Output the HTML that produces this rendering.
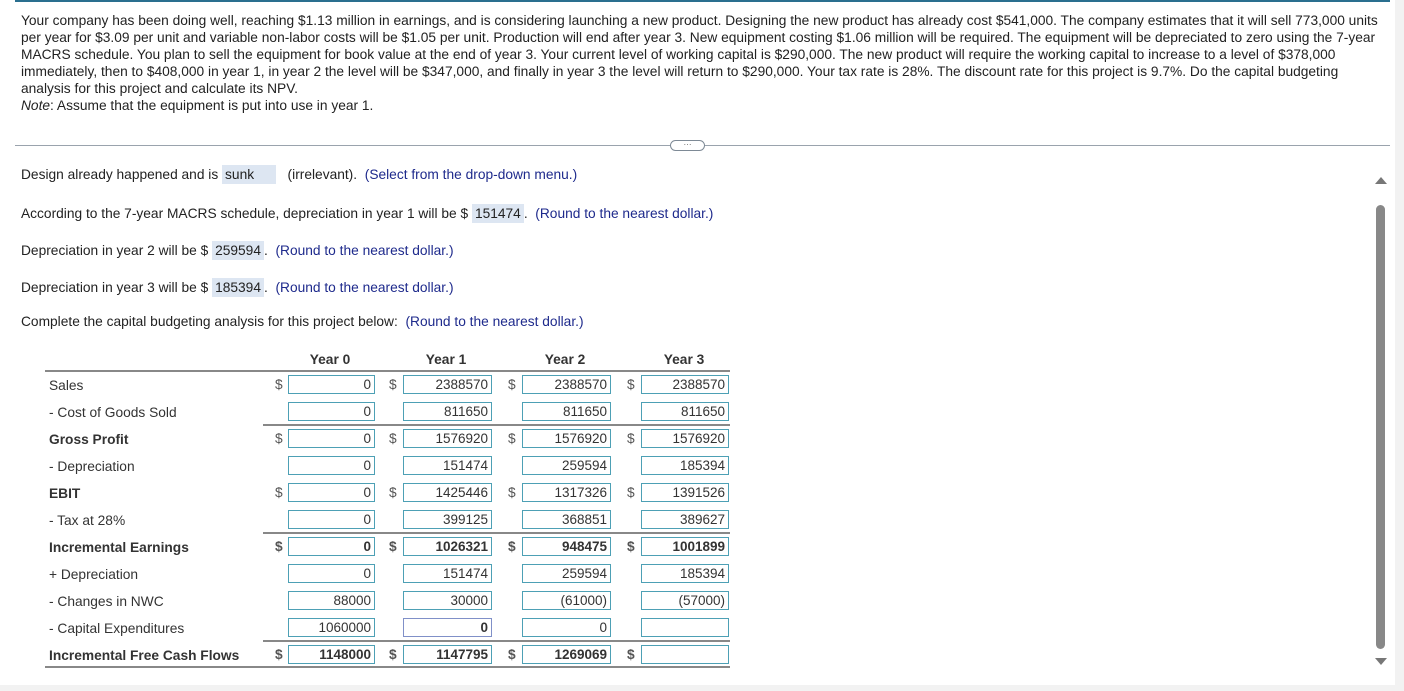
<!DOCTYPE html>
<html><head><style>
body{margin:0;width:1404px;height:691px;background:#f2f2f2;font-family:"Liberation Sans",Arial,sans-serif;font-size:13.75px;color:#222;position:relative;overflow:hidden}
.main{position:absolute;left:0;top:0;width:1395px;height:685px;background:#fff}
.topline{position:absolute;left:15px;top:0;width:1375px;height:2px;background:#2a6f8f}
.p{position:absolute;left:21px;top:12px;width:1365px;line-height:17.1px}
.sep{position:absolute;left:15px;top:145px;width:1375px;height:1px;background:#9aa3ad}
.pill{position:absolute;left:670px;top:140px;width:33px;height:9px;border:1px solid #7e8a96;border-radius:6px;background:#fff;font-size:8px;line-height:7px;text-align:center;color:#555}
.t{position:absolute;left:21px;white-space:nowrap}
.b{color:#1e2a8c}
.hl{background:#dde6f2;padding:2px 3px}
.sc{position:absolute;left:1376px;top:205px;width:9px;height:444px;background:#888;border-radius:5px}
.up{position:absolute;left:1375px;top:177px;width:0;height:0;border-left:6px solid transparent;border-right:6px solid transparent;border-bottom:7px solid #777}
.dn{position:absolute;left:1375px;top:658px;width:0;height:0;border-left:6px solid transparent;border-right:6px solid transparent;border-top:7px solid #777}
.lbl{position:absolute;left:49px;white-space:nowrap;color:#333}
.bold{font-weight:bold}
.box{position:absolute;height:19px;border:1px solid #4da0b5;box-sizing:border-box;background:#fff;text-align:right;padding-right:3px;line-height:17px;color:#333;font-size:13.5px}
.ds{position:absolute;color:#555}
.hd{position:absolute;top:352px;font-weight:bold;color:#333;width:90px;text-align:center}
.ln{position:absolute;height:2px;background:#888}
</style></head><body>
<div class="main">
<div class="topline"></div>
<div class="p">Your company has been doing well, reaching $1.13 million in earnings, and is considering launching a new product. Designing the new product has already cost $541,000. The company estimates that it will sell 773,000 units per year for $3.09 per unit and variable non-labor costs will be $1.05 per unit. Production will end after year 3. New equipment costing $1.06 million will be required. The equipment will be depreciated to zero using the 7-year MACRS schedule. You plan to sell the equipment for book value at the end of year 3. Your current level of working capital is $290,000. The new product will require the working capital to increase to a level of $378,000 immediately, then to $408,000 in year 1, in year 2 the level will be $347,000, and finally in year 3 the level will return to $290,000. Your tax rate is 28%. The discount rate for this project is 9.7%. Do the capital budgeting analysis for this project and calculate its NPV.<br><i>Note</i>: Assume that the equipment is put into use in year 1.</div>
<div class="sep"></div><div class="pill">···</div>
<div class="t" style="top:167px">Design already happened and is <span class="hl" style="padding-right:22px">sunk</span> &nbsp; (irrelevant). &nbsp;<span class="b">(Select from the drop-down menu.)</span></div>
<div class="t" style="top:206px">According to the 7-year MACRS schedule, depreciation in year 1 will be $ <span class="hl">151474</span>. &nbsp;<span class="b">(Round to the nearest dollar.)</span></div>
<div class="t" style="top:243px">Depreciation in year 2 will be $ <span class="hl">259594</span>. &nbsp;<span class="b">(Round to the nearest dollar.)</span></div>
<div class="t" style="top:280px">Depreciation in year 3 will be $ <span class="hl">185394</span>. &nbsp;<span class="b">(Round to the nearest dollar.)</span></div>
<div class="t" style="top:314px">Complete the capital budgeting analysis for this project below: &nbsp;<span class="b">(Round to the nearest dollar.)</span></div>
<div class="hd" style="left:285px">Year 0</div><div class="hd" style="left:401px">Year 1</div><div class="hd" style="left:520px">Year 2</div><div class="hd" style="left:639px">Year 3</div>
<div class="ln" style="left:45px;top:370px;width:685px"></div>
<div class="ln" style="left:263px;top:424px;width:467px"></div>
<div class="ln" style="left:263px;top:532px;width:467px"></div>
<div class="ln" style="left:263px;top:640px;width:467px"></div>
<div class="ln" style="left:45px;top:666px;width:685px"></div>
<div class="sc"></div><div class="up"></div><div class="dn"></div>
<div id="tb"></div>
</div>
<script>
var rows=[["Sales",1,0,["0","2388570","2388570","2388570"]],
["- Cost of Goods Sold",0,0,["0","811650","811650","811650"]],
["Gross Profit",1,1,["0","1576920","1576920","1576920"]],
["- Depreciation",0,0,["0","151474","259594","185394"]],
["EBIT",1,1,["0","1425446","1317326","1391526"]],
["- Tax at 28%",0,0,["0","399125","368851","389627"]],
["Incremental Earnings",1,2,["0","1026321","948475","1001899"]],
["+ Depreciation",0,0,["0","151474","259594","185394"]],
["- Changes in NWC",0,0,["88000","30000","(61000)","(57000)"]],
["- Capital Expenditures",0,0,["1060000","0","0",""]],
["Incremental Free Cash Flows",1,2,["1148000","1147795","1269069",""]]];
var bx=[288,403,522,641],bw=[87,89,89,88],dx=[275,389,508,627],h="";
rows.forEach(function(r,i){var y=375+i*27;
h+='<div class="lbl'+(r[2]?' bold':'')+'" style="top:'+(y+3)+'px">'+r[0]+'</div>';
for(var j=0;j<4;j++){
if(r[1])h+='<div class="ds'+(r[2]==2?' bold':'')+'" style="left:'+dx[j]+'px;top:'+(y+2)+'px">$</div>';
var bold=(r[2]==2)||(i==9&&j==1);
h+='<div class="box'+(bold?' bold':'')+'" style="left:'+bx[j]+'px;top:'+y+'px;width:'+bw[j]+'px'+(i==9&&j==1?';border-color:#8090c8':'')+'">'+r[3][j]+'</div>';}
});
document.getElementById("tb").innerHTML=h;
</script>
</body></html>
